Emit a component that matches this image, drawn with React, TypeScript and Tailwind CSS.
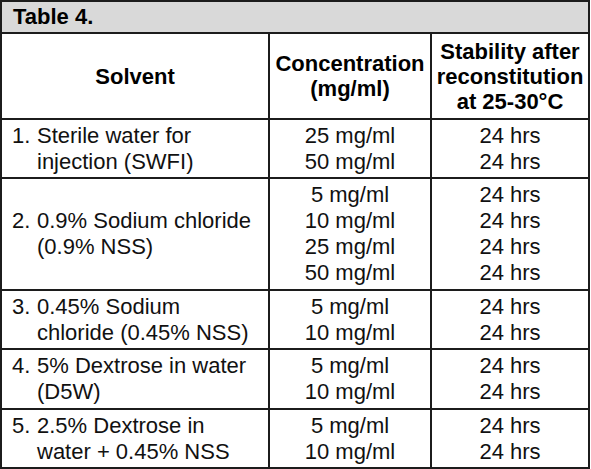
const rows = [
  {
    no: "1.",
    solvent: ["Sterile water for", "injection (SWFI)"],
    conc: ["25 mg/ml", "50 mg/ml"],
    h: "h-[59px]",
  },
  {
    no: "2.",
    solvent: ["0.9% Sodium chloride", "(0.9% NSS)"],
    conc: ["5 mg/ml", "10 mg/ml", "25 mg/ml", "50 mg/ml"],
    h: "h-[112px]",
  },
  {
    no: "3.",
    solvent: ["0.45% Sodium", "chloride (0.45% NSS)"],
    conc: ["5 mg/ml", "10 mg/ml"],
    h: "h-[59px]",
  },
  {
    no: "4.",
    solvent: ["5% Dextrose in water", "(D5W)"],
    conc: ["5 mg/ml", "10 mg/ml"],
    h: "h-[60px]",
  },
  {
    no: "5.",
    solvent: ["2.5% Dextrose in", "water + 0.45% NSS"],
    conc: ["5 mg/ml", "10 mg/ml"],
    h: "h-[57px]",
  },
];

export default function App() {
  return (
    <div className="w-[591px] h-[469px] bg-white font-['Liberation_Sans',Arial,sans-serif] text-[22px] leading-[26px] text-[#111]">
      <div className="w-[590px] h-[469px] border-2 border-[#1c1c1c]">
        {/* Title bar */}
        <div className="h-[32px] bg-[#d9d9d9] border-b-2 border-[#1c1c1c] flex items-center pl-[11px] font-bold text-black">
          Table 4.
        </div>

        {/* Header */}
        <div className="grid grid-cols-[268px_162px_156px] h-[86px] border-b-2 border-[#1c1c1c] font-bold text-black leading-[25px]">
          <div className="border-r-2 border-[#1c1c1c] flex items-center justify-center">Solvent</div>
          <div className="border-r-2 border-[#1c1c1c] flex flex-col items-center justify-center text-center">
            <span>Concentration</span>
            <span>(mg/ml)</span>
          </div>
          <div className="flex flex-col items-center justify-center text-center">
            <span>Stability after</span>
            <span>reconstitution</span>
            <span>at 25-30°C</span>
          </div>
        </div>

        {rows.map((r, i) => (
          <div
            key={r.no}
            className={`grid grid-cols-[268px_162px_156px] ${r.h} ${i < rows.length - 1 ? "border-b-2 border-[#1c1c1c]" : ""}`}
          >
            <div className="border-r-2 border-[#1c1c1c] flex items-center pl-[10px]">
              <div className="flex">
                <span className="w-[25px] shrink-0">{r.no}</span>
                <div className="flex flex-col whitespace-nowrap">
                  {r.solvent.map((s) => (
                    <span key={s}>{s}</span>
                  ))}
                </div>
              </div>
            </div>
            <div className="border-r-2 border-[#1c1c1c] flex flex-col items-center justify-center">
              {r.conc.map((c) => (
                <span key={c}>{c}</span>
              ))}
            </div>
            <div className="flex flex-col items-center justify-center">
              {r.conc.map((c) => (
                <span key={c}>24 hrs</span>
              ))}
            </div>
          </div>
        ))}
      </div>
    </div>
  );
}
